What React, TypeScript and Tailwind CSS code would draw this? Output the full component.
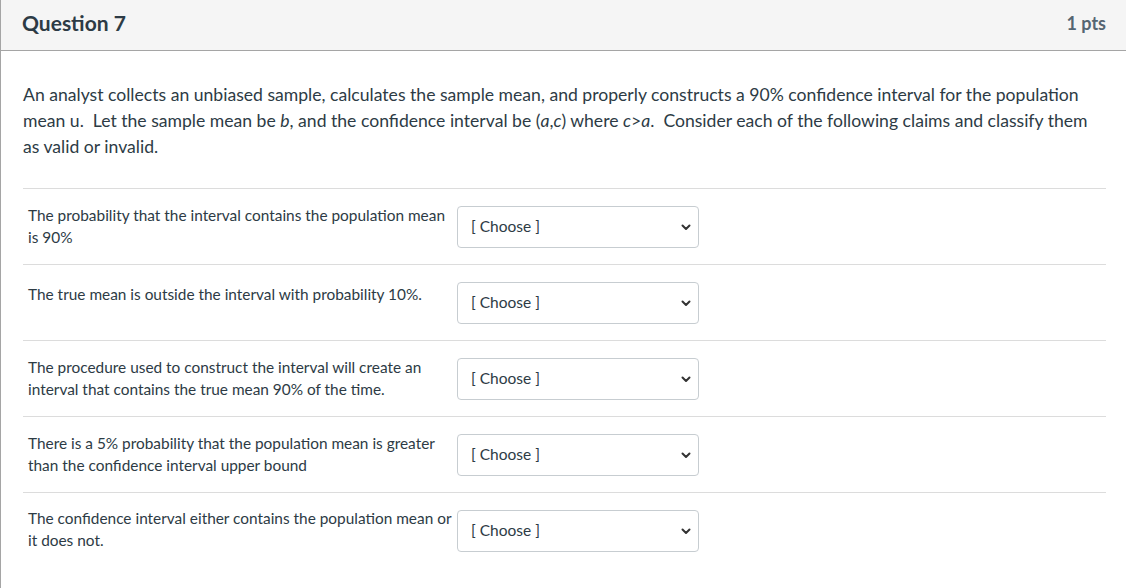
const rows: { text: string; offset: string }[] = [
  { text: "The probability that the interval contains the population mean is 90%", offset: "-mt-[2px]" },
  { text: "The true mean is outside the interval with probability 10%.", offset: "mt-[1px]" },
  {
    text: "The procedure used to construct the interval will create an interval that contains the true mean 90% of the time.",
    offset: "-mt-[2px]",
  },
  {
    text: "There is a 5% probability that the population mean is greater than the confidence interval upper bound",
    offset: "-mt-[2px]",
  },
  { text: "The confidence interval either contains the population mean or it does not.", offset: "-mt-[3px]" },
];

function ChooseSelect() {
  return (
    <div className="w-[242px] h-[42px] shrink-0 border border-[#c7cdd1] rounded-[4px] bg-white flex items-center justify-between pl-[13px] pr-[7px]">
      <span className="text-[15.5px] text-[#2d3b45]">[ Choose ]</span>
      <svg width="10" height="8" viewBox="0 0 10 8" className="text-[#333]">
        <path d="M1.5 2.5 L5 6 L8.5 2.5" fill="none" stroke="currentColor" strokeWidth="2" strokeLinecap="round" strokeLinejoin="round" />
      </svg>
    </div>
  );
}

export default function App() {
  return (
    <div className="w-[1126px] h-[588px] overflow-hidden bg-white border-l border-[#a5a5a5] font-['Lato','Open_Sans',sans-serif] text-[#2d3b45]">
      {/* Header */}
      <div className="h-[51px] bg-[#f5f5f5] border-b border-[#a5a5a5] flex items-center justify-between pl-[21px] pr-[20px] pb-[4px]">
        <h2 className="text-[21px] font-bold text-[#2d3b45]">Question 7</h2>
        <span className="text-[18px] font-bold text-[#556572]">1 pts</span>
      </div>

      <div className="pl-[22px] pr-[20px]">
        <p className="mt-[31px] text-[17.6px] leading-[26px]">
          An analyst collects an unbiased sample, calculates the sample mean, and properly constructs a 90% confidence
          interval for the population mean u.&nbsp; Let the sample mean be <em>b</em>, and the confidence interval be (
          <em>a</em>,<em>c</em>) where <em>c</em>&gt;<em>a</em>.&nbsp; Consider each of the following claims and classify
          them as valid or invalid.
        </p>

        <div className="mt-[28px]">
          {rows.map((r, i) => (
            <div key={i} className="border-t border-[#dcdcdc] flex items-start pt-[17px] pb-[16px]">
              <div className={`w-[434px] pl-[5px] pr-[2px] text-[15.4px] leading-[22px] ${r.offset}`}>{r.text}</div>
              <ChooseSelect />
            </div>
          ))}
        </div>
      </div>
    </div>
  );
}
